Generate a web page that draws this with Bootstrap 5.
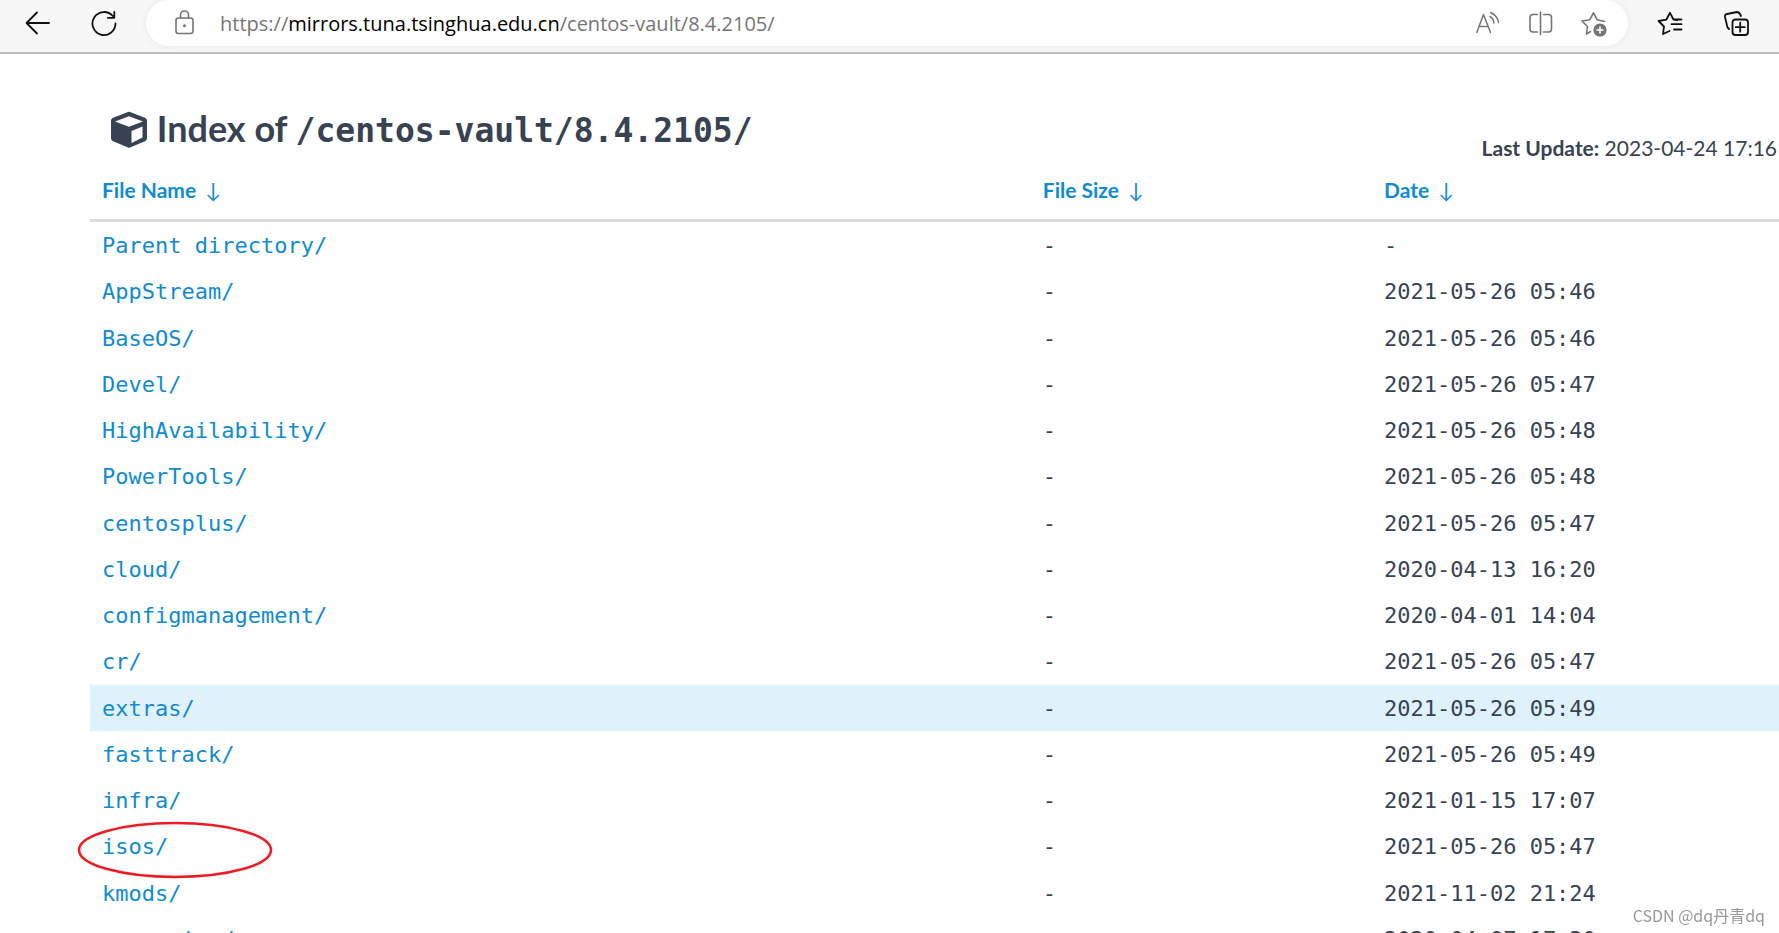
<!DOCTYPE html>
<html lang="en">
<head>
<meta charset="utf-8">
<meta name="viewport" content="width=device-width, initial-scale=1">
<title>Index of /centos-vault/8.4.2105/</title>
<link rel="stylesheet" href="https://cdn.jsdelivr.net/npm/bootstrap@5.3.0/dist/css/bootstrap.min.css">
<style>
  body { font-family: Lato, sans-serif; color: #374352; background: #fff; }
  a, a:hover { color: #118bcf; text-decoration: none; }
  .browser-bar { background: #f7f7f7; border-bottom: 2px solid #bcbcbc; height: 54px; padding: 0 27px 6px 24px; }
  .tool { border: 0; background: none; padding: 0; display: flex; color: #111; }
  .tool svg, .address svg { display: block; fill: none; stroke: currentColor; stroke-linecap: round; stroke-linejoin: round; }
  .nav-tools { gap: 38px; margin-right: 28px; }
  .edge-tools { gap: 40px; margin-left: 28px; }
  .address { height: 46px; background: #fff; border-radius: 23px; color: #757575; padding: 0 20px 0 28px; box-shadow: 0 0 6px #e6e6e6; }
  .address .tool { color: #757575; }
  .url-wrap { font: 20px/30px "Open Sans", sans-serif; padding-top: 2px; }
  .url-wrap a { color: #757575; }
  .url-wrap b { font-weight: 400; color: #000; }
  .listing { padding-left: 90px; }
  .page-head { padding: 50px 2px 0 20px; height: 112px; }
  .page-title { font-size: 36px; line-height: 48px; font-weight: 700; margin: 0; }
  .page-title svg { vertical-align: -7px; }
  .page-title code { font: 700 33px/48px "DejaVu Sans Mono", monospace; color: inherit; }
  .updated { font-size: 21px; line-height: 28px; margin-top: 30px; }
  .files { width: 100%; table-layout: fixed; margin: 0; }
  .files th { font-size: 21px; line-height: 28px; font-weight: 700; padding: 10px 12px 15px; border-bottom: 3px solid #dcdcdc; }
  .files td { font: 22px/34px "DejaVu Sans Mono", monospace; padding: 7px 12px 5px; }
  .files tbody tr:nth-child(4n+2) td { padding-bottom: 6px; }
  .files .picked { background: #dff1fb; }
  .col-name { width: 55.7%; }
  .col-size { width: 20.2%; }
  .ring { position: absolute; left: -13px; top: -2px; pointer-events: none; }
  .credit { position: fixed; right: 14px; bottom: 6px; font: 16px/24px "Noto Sans CJK SC", sans-serif; color: #999; }
</style>
</head>
<body class="vh-100 overflow-hidden">
<header class="browser-bar d-flex align-items-center">
  <div class="nav-tools d-flex">
    <button class="tool" aria-label="Back"><svg width="28" height="28" stroke-width="1.8"><path d="M25 14H2.500M13 3.500 2.500 14 13 24.500"/></svg></button>
    <button class="tool" aria-label="Refresh"><svg width="28" height="28" stroke-width="1.8"><path d="M22.700 7A11.500 11.500 0 1 0 25.500 14.500M24.300 3V8.800H17.800"/></svg></button>
  </div>
  <div class="address d-flex align-items-center flex-grow-1">
    <svg width="22" height="26" stroke-width="1.6"><rect x="2" y="8" width="17" height="15.500" rx="2.500"/><path d="M6.500 8V5a4 4 0 0 1 8 0V8"/><circle cx="10.500" cy="15.700" r=".7" fill="currentColor"/></svg>
    <div class="url-wrap flex-grow-1 ms-4"><a href="#">https://<b>mirrors.tuna.tsinghua.edu.cn</b>/centos-vault/8.4.2105/</a></div>
    <div class="d-flex gap-4">
      <button class="tool" aria-label="Read aloud"><svg width="28" height="28" stroke-width="1.5"><path d="M0.800 23.500 7.500 5.500 14.500 23.500M3.200 17.500H12M14 7.500Q17.500 9.500 18 14M14.500 3.500Q21.500 6.500 22.500 13.500"/></svg></button>
      <button class="tool" aria-label="Split screen"><svg width="28" height="28" stroke-width="1.6"><path d="M9.500 5.500H5a3 3 0 0 0-3 3V20a3 3 0 0 0 3 3H9.500M15.500 5.500h5a3 3 0 0 1 3 3V20a3 3 0 0 1-3 3h-5M12.500 3V25.500"/></svg></button>
      <button class="tool" aria-label="Add to favorites"><svg width="28" height="28" stroke-width="1.6"><path d="M10.500 22.500 6.500 25.200 7.500 17.500 2 12 9.800 10.700 13.500 3.800 17 10.700 24.500 12.500"/><circle cx="20" cy="21" r="5.800" fill="currentColor"/><path stroke="#fff" d="M17 21h6M20 18v6"/></svg></button>
    </div>
  </div>
  <div class="edge-tools d-flex">
    <button class="tool" aria-label="Favorites"><svg width="28" height="28" stroke-width="1.8"><path d="M13.500 22 7 25 8 17.500 2.500 12 10.300 10.700 14 3.800 17.500 10.500 21.500 11M15.500 15.200h10M18 10.500H25.500M18 20.500H25.500"/></svg></button>
    <button class="tool" aria-label="Collections"><svg width="28" height="28" stroke-width="1.8"><rect x="8.500" y="10.500" width="15.500" height="15.500" rx="3"/><path d="M16.200 13.700v9M11.700 18.200h9M5 20 3.500 18.500 1 8Q0.500 5.500 3 5L13 3Q15 3 16 5L17 7"/></svg></button>
  </div>
</header>
<main class="listing">
  <div class="page-head d-flex justify-content-between">
    <h1 class="page-title"><svg width="38" height="38" viewBox="0 0 38 38"><path fill="currentColor" fill-rule="evenodd" d="M18 1 Q19 .500 20 1L35.500 7Q37 8 37 9.500V27Q37 29 35.500 30L20 36.500Q19 37 18 36.500L2.500 30Q1 29 1 27V9.500Q1 8 2.500 7ZM19 5.300 5 10.500 19 15.800 33 10.500ZM21.500 20V32L32.500 26.500V15.500Z"/></svg> Index of <code>/centos-vault/8.4.2105/</code></h1>
    <div class="updated text-nowrap"><b>Last Update:</b> 2023-04-24 17:16</div>
  </div>
  <table class="files">
    <thead>
      <tr><th class="col-name"><a href="#">File Name <span class="fw-normal ms-1">↓</span></a></th><th class="col-size"><a href="#">File Size <span class="fw-normal ms-1">↓</span></a></th><th><a href="#">Date <span class="fw-normal ms-1">↓</span></a></th></tr>
    </thead>
    <tbody>
      <tr><td><a href="#">Parent directory/</a></td><td>-</td><td>-</td></tr>
      <tr><td><a href="#">AppStream/</a></td><td>-</td><td>2021-05-26 05:46</td></tr>
      <tr><td><a href="#">BaseOS/</a></td><td>-</td><td>2021-05-26 05:46</td></tr>
      <tr><td><a href="#">Devel/</a></td><td>-</td><td>2021-05-26 05:47</td></tr>
      <tr><td><a href="#">HighAvailability/</a></td><td>-</td><td>2021-05-26 05:48</td></tr>
      <tr><td><a href="#">PowerTools/</a></td><td>-</td><td>2021-05-26 05:48</td></tr>
      <tr><td><a href="#">centosplus/</a></td><td>-</td><td>2021-05-26 05:47</td></tr>
      <tr><td><a href="#">cloud/</a></td><td>-</td><td>2020-04-13 16:20</td></tr>
      <tr><td><a href="#">configmanagement/</a></td><td>-</td><td>2020-04-01 14:04</td></tr>
      <tr><td><a href="#">cr/</a></td><td>-</td><td>2021-05-26 05:47</td></tr>
      <tr class="picked"><td><a href="#">extras/</a></td><td>-</td><td>2021-05-26 05:49</td></tr>
      <tr><td><a href="#">fasttrack/</a></td><td>-</td><td>2021-05-26 05:49</td></tr>
      <tr><td><a href="#">infra/</a></td><td>-</td><td>2021-01-15 17:07</td></tr>
      <tr><td class="position-relative"><a href="#">isos/</a><svg class="ring" width="196" height="58"><ellipse cx="98" cy="29" rx="96" ry="27" fill="none" stroke="#ed1c24" stroke-width="2.6"/></svg></td><td>-</td><td>2021-05-26 05:47</td></tr>
      <tr><td><a href="#">kmods/</a></td><td>-</td><td>2021-11-02 21:24</td></tr>
      <tr><td><a href="#">messaging/</a></td><td>-</td><td>2020-04-07 17:20</td></tr>
    </tbody>
  </table>
</main>
<div class="credit">CSDN @dq丹青dq</div>
<script src="https://cdn.jsdelivr.net/npm/bootstrap@5.3.0/dist/js/bootstrap.bundle.min.js"></script>
</body>
</html>
